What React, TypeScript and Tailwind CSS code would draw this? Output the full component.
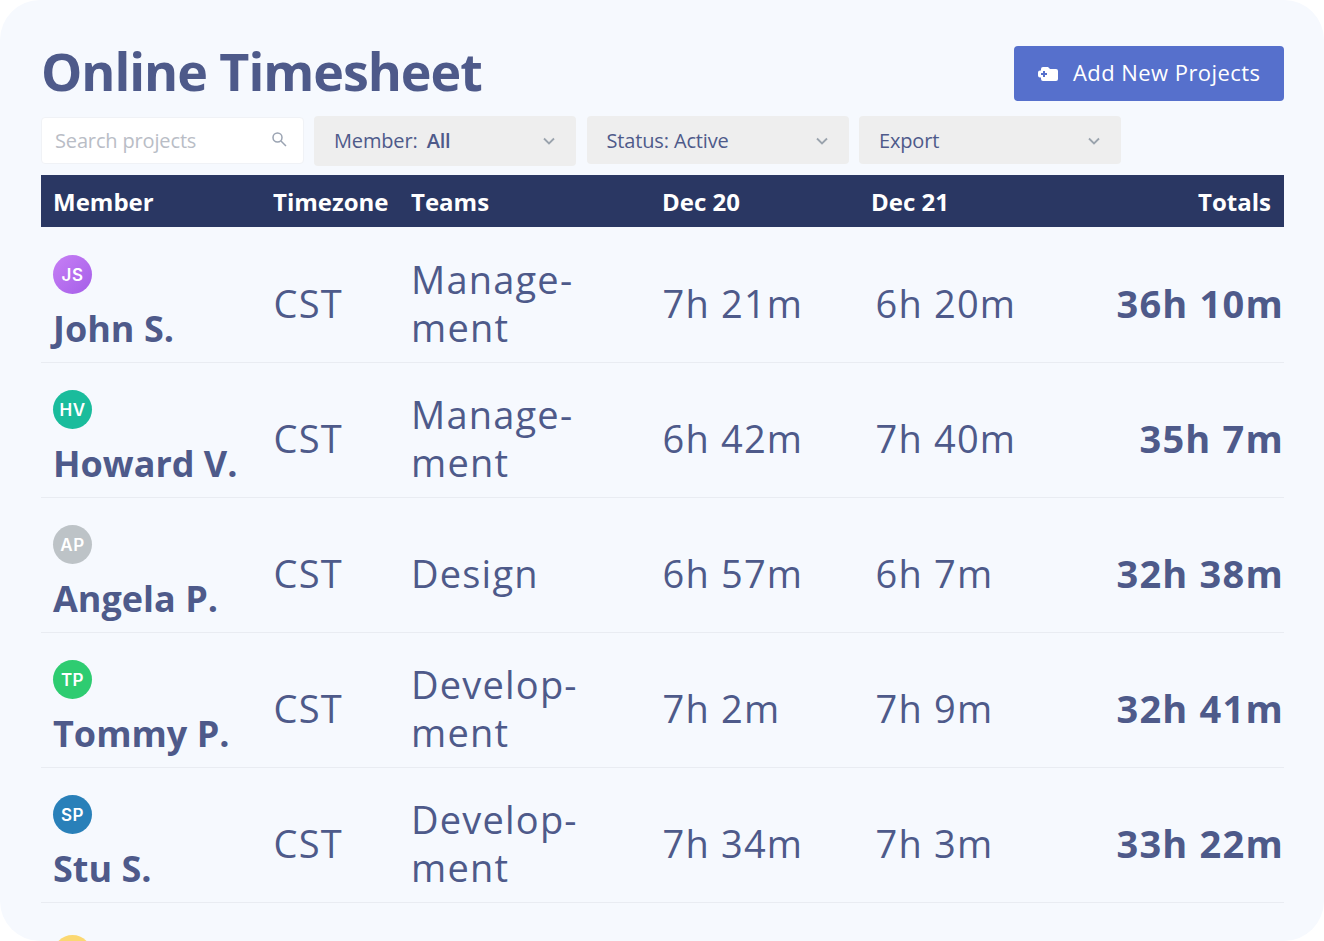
import React from "react";

const rows = [
  { i: "JS", name: "John S.", team: ["Manage-", "ment"], a: "7h 21m", b: "6h 20m", t: "36h 10m", bg: "bg-gradient-to-br from-[#c77ff5] to-[#a55ee8]" },
  { i: "HV", name: "Howard V.", team: ["Manage-", "ment"], a: "6h 42m", b: "7h 40m", t: "35h 7m", bg: "bg-[#1abc9c]" },
  { i: "AP", name: "Angela P.", team: ["Design"], a: "6h 57m", b: "6h 7m", t: "32h 38m", bg: "bg-[#bdc3c7]" },
  { i: "TP", name: "Tommy P.", team: ["Develop-", "ment"], a: "7h 2m", b: "7h 9m", t: "32h 41m", bg: "bg-[#2ecc71]" },
  { i: "SP", name: "Stu S.", team: ["Develop-", "ment"], a: "7h 34m", b: "7h 3m", t: "33h 22m", bg: "bg-[#2980b9]" },
];

function Select({ children, tall }: { children: React.ReactNode; tall?: boolean }) {
  return (
    <div className={`w-[262px] ${tall ? "h-[50px] pb-[2px]" : "h-[48px]"} bg-[#eeeeee] rounded-[4px] flex items-center justify-between pt-[2px] pl-[20px] pr-[20px] text-[20px] tracking-[-0.15px] text-[#4e5a8a]`}>
      <span className="whitespace-pre">{children}</span>
      <svg width="14" height="14" viewBox="0 0 14 14" fill="none" stroke="#9aa3ad" strokeWidth="1.8"><path d="M2 4.5 7 9.5 12 4.5" /></svg>
    </div>
  );
}

export default function App() {
  return (
    <div className="w-[1324px] h-[941px] overflow-hidden bg-white" style={{ fontFamily: '"Open Sans", "Noto Sans", sans-serif' }}>
      <div className="h-[941px] overflow-hidden bg-[#f6f9fe] rounded-[40px] pl-[41px] pr-[40px] pt-[46px]">
        <div className="flex justify-between items-start h-[70px]">
          <h1 className="text-[52px] leading-[50px] font-bold tracking-[-1.05px] text-[#4e5a8a]">Online Timesheet</h1>
          <button className="w-[270px] h-[55px] bg-[#5670cc] rounded-[4px] flex items-center pl-[24px] gap-[15px] pb-[2px] text-white text-[22px] tracking-[0.44px]">
            <svg width="20" height="14" viewBox="0 0 20 14" className="mt-[2px]">
              <path fill="#fff" fillRule="evenodd" d="M5 0h5l2 2h6a2 2 0 0 1 2 2v8a2 2 0 0 1-2 2H5a2 2 0 0 1-2-2v-1.5H2A2 2 0 0 1 0 8.5v-3a2 2 0 0 1 2-2h1V2a2 2 0 0 1 2-2Zm0 4v2H3v2h2v2h2V8h2V6H7V4H5Z" />
            </svg>
            <span>Add New Projects</span>
          </button>
        </div>
        <div className="flex gap-[10.5px] h-[59px] items-start">
          <div className="w-[262.5px] h-[47px] mt-[1px] bg-white rounded-[4px] border border-[#f0f2f6] flex items-center justify-between pl-[13px] pr-[15px] text-[20px] tracking-[-0.15px] text-[#b9bdc6]">
            <span>Search projects</span>
            <svg width="16" height="16" viewBox="0 0 16 16" fill="none" stroke="#9aa3b2" strokeWidth="1.5" className="-mt-[3px] mr-[1px]"><circle cx="6.5" cy="6.5" r="4.5" /><path d="m10 10 5 5" /></svg>
          </div>
          <Select tall>Member: <span className="ml-[4px] font-semibold">All</span></Select>
          <Select>Status: Active</Select>
          <Select>Export</Select>
        </div>
        <div className="grid grid-cols-[232px_138px_251px_209px_1fr] h-[52px] mb-[1px] pt-[2px] bg-[#2a3763] items-center text-white text-[24px] font-bold">
          <div className="pl-[12px]">Member</div>
          <div>Timezone</div>
          <div>Teams</div>
          <div>Dec 20</div>
          <div className="flex justify-between pr-[13px]"><span>Dec 21</span><span>Totals</span></div>
        </div>
        {rows.map((r) => (
          <div key={r.i} className="grid grid-cols-[232px_138px_251px_209px_1fr] h-[135px] pt-[16px] border-b border-[#e9ecf2] items-center text-[38px] leading-[48px] tracking-[1.2px] text-[#4e5a8a]">
            <div className="pl-[12px] self-start mt-[11px] tracking-normal">
              <div className={`w-[39px] h-[39px] rounded-full ${r.bg} flex items-center justify-center pt-[1px] text-white text-[17px] font-semibold tracking-[0.5px]`} style={{ fontFamily: 'Inter, sans-serif' }}>{r.i}</div>
              <div className="text-[36px] leading-[48px] font-bold mt-[11px] whitespace-nowrap">{r.name}</div>
            </div>
            <div className="pl-[0.5px]">CST</div>
            <div>{r.team.map((l) => <div key={l}>{l}</div>)}</div>
            <div className="pl-[0.5px]">{r.a}</div>
            <div className="flex justify-between pl-[4.5px]"><span>{r.b}</span><span className="font-bold">{r.t}</span></div>
          </div>
        ))}
        <div className="pl-[12px] pt-[32px]"><div className="w-[39px] h-[39px] rounded-full bg-[#fbd872]" /></div>
      </div>
    </div>
  );
}
